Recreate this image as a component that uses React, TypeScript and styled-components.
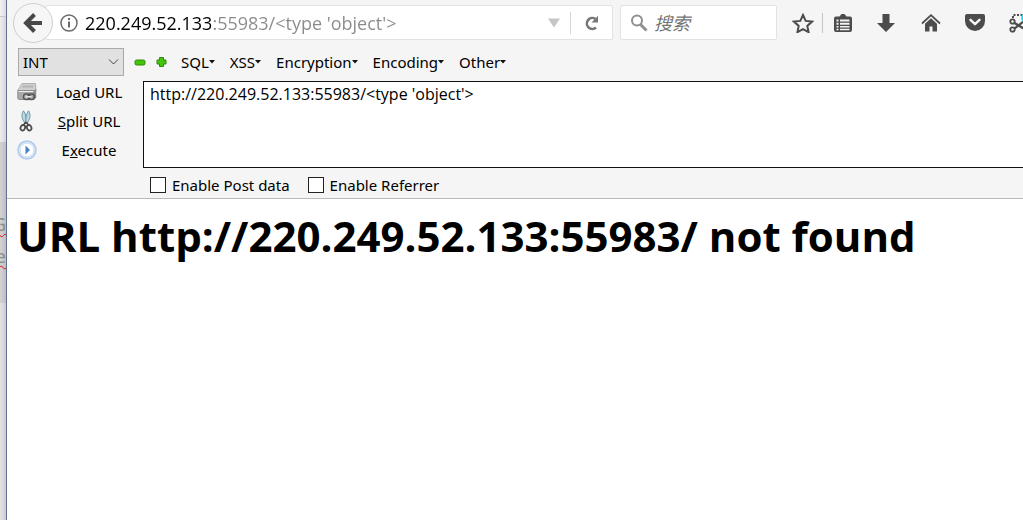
import React from "react";
import styled, { createGlobalStyle } from "styled-components";

const GlobalStyle = createGlobalStyle`
  *, *::before, *::after { box-sizing: border-box; }
  html, body { margin: 0; height: 100%; }
  #root { min-height: 100%; display: flex; }
  body, button, input, textarea, select {
    font-family: "Noto Sans", "Open Sans", "Noto Sans CJK SC", sans-serif;
    font-size: 15px;
    color: #000;
  }
  button { border: 0; padding: 0; background: none; }
`;

const Desktop = styled.div`
  display: flex;
  flex: 1;
  min-width: 0;
  min-height: 100vh;
  overflow: hidden;
  background: #fff;
`;

const BehindWindow = styled.aside`
  width: 6px;
  flex: none;
  overflow: hidden;
  display: flex;
  flex-direction: column;
  background: linear-gradient(to right, #e4e4e4, #cccccc);
`;

const BehindTop = styled.div`
  height: 17px;
  flex: none;
  border-bottom: 1px solid #c9c9c9;
  background: linear-gradient(to right, #f2f2f2, #dcdcdc);
`;

const BehindBlank = styled.div`
  height: 125px;
  flex: none;
  background: linear-gradient(to right, #eeeeee, #d6d6d6);
`;

const BehindText = styled.div`
  height: 161px;
  flex: none;
  padding-top: 66px;
  display: flex;
  flex-direction: column;
  align-items: flex-end;
  background: linear-gradient(to right, #d4d4d4, #bebebe);
  color: #8c8c8c;
  font-size: 18px;
  line-height: 32px;
`;

const Misspelled = styled.span`
  text-decoration: underline wavy #e01010 1px;
  text-underline-offset: 2px;
`;

const BrowserWindow = styled.div`
  flex: 1;
  min-width: 0;
  border-left: 1px solid #5f7391;
  overflow: hidden;
`;

const Chrome = styled.header`
  background: #f5f5f5;
  border-bottom: 1px solid #b9b9b9;
`;

const NavBar = styled.div`
  display: flex;
  align-items: center;
  height: 45px;
  padding-left: 6px;
  overflow: hidden;
`;

const BackButton = styled.button`
  position: relative;
  z-index: 1;
  flex: none;
  width: 40px;
  height: 40px;
  display: grid;
  place-items: center;
  border: 1px solid #cfcfcf;
  border-radius: 50%;
  background: #f6f6f6;
`;

const Field = styled.div`
  display: flex;
  align-items: center;
  height: 35px;
  border: 1px solid #e2e2e2;
  border-radius: 2px;
  background: #fff;
`;

const AddressField = styled(Field)`
  flex: 1;
  min-width: 0;
  margin-left: -8px;
  padding-left: 14px;
`;

const AddressInput = styled.input`
  flex: 1;
  min-width: 0;
  border: 0;
  outline: 0;
  padding: 0;
  margin-left: 7px;
  font-family: "Open Sans", "Noto Sans", sans-serif;
  font-size: 18px;
  color: transparent;
  caret-color: #000;
  background: linear-gradient(to right, #000 126px, #8a8a8a 126px);
  background-clip: text;
  -webkit-background-clip: text;
`;

const DropButton = styled.button`
  display: grid;
  place-items: center;
  width: 34px;
  height: 22px;
  border-right: 1px solid #d6d6d6;
`;

const ReloadButton = styled.button`
  display: grid;
  place-items: center;
  width: 41px;
  height: 24px;
`;

const SearchField = styled(Field)`
  flex: none;
  width: 157px;
  margin-left: 7px;
  padding-left: 9px;
`;

const SearchInput = styled.input`
  flex: 1;
  min-width: 0;
  border: 0;
  outline: 0;
  padding: 0;
  margin-left: 6px;
  font-size: 18px;
  background: transparent;
  &::placeholder { color: #757575; font-style: italic; opacity: 1; }
`;

const Tools = styled.div`
  flex: none;
  width: 246px;
  padding-left: 7px;
  display: flex;
  align-items: center;
  overflow: hidden;
`;

const ToolButton = styled.button<{ $wide?: number; $divided?: boolean }>`
  flex: none;
  display: grid;
  place-items: center;
  width: ${(p) => p.$wide ?? 44}px;
  height: 20px;
  border-right: ${(p) => (p.$divided ? "1px solid #c4c4c4" : "0")};
`;

const MenuRow = styled.div`
  display: flex;
  align-items: center;
  height: 34px;
  padding-left: 11px;
`;

const SelectBox = styled.div`
  position: relative;
  width: 106px;
  height: 28px;
  svg { position: absolute; right: 5px; top: 10px; pointer-events: none; }
`;

const TypeSelect = styled.select`
  appearance: none;
  width: 100%;
  height: 100%;
  padding: 0 4px;
  border: 1px solid #a9a9a9;
  border-radius: 0;
  background: #e1e1e1;
`;

const StepButton = styled.button`
  display: grid;
  place-items: center;
  width: 12px;
  height: 12px;
  margin-left: 10px;
`;

const Menus = styled.nav`
  display: flex;
  gap: 15px;
  margin-left: 13px;
`;

const MenuButton = styled.button`
  display: flex;
  align-items: center;
  line-height: 20px;
`;

const Editor = styled.div`
  display: flex;
  height: 89px;
  padding: 2px 0 0 8px;
`;

const Actions = styled.div`
  flex: none;
  width: 128px;
  display: flex;
  flex-direction: column;
  margin-top: -4px;
`;

const ActionButton = styled.button`
  display: grid;
  grid-template-columns: 24px 100px;
  place-items: center;
  width: 124px;
  height: 29px;
  line-height: 20px;
`;

const UrlText = styled.textarea`
  flex: 1;
  min-width: 0;
  height: 87px;
  padding: 2px 6px;
  border: 1px solid #111;
  border-right: 0;
  border-radius: 0;
  outline: 0;
  resize: none;
  font-family: "Open Sans", "Noto Sans", sans-serif;
  font-size: 16px;
  line-height: 20px;
  background: #fff;
`;

const Options = styled.div`
  display: flex;
  align-items: center;
  gap: 18px;
  height: 30px;
  padding: 4px 0 0 143px;
`;

const Option = styled.label`
  display: flex;
  align-items: center;
  gap: 6px;
  line-height: 20px;
`;

const Check = styled.input`
  appearance: none;
  width: 16px;
  height: 16px;
  margin: 0;
  border: 1px solid #222;
  background: #fff;
  &:checked { background: #444; }
`;

const Page = styled.main`
  padding: 7px 10px;
`;

const Message = styled.h1`
  margin: 0;
  font-family: "Open Sans", "Noto Sans", sans-serif;
  font-size: 42px;
  line-height: 60px;
  font-weight: 700;
  white-space: nowrap;
`;

const BackIcon = () => (
  <svg width="20" height="20" viewBox="0 0 20 20" fill="none" stroke="#484848" strokeWidth="4">
    <path d="M19 10H4M11.5 1.5 3 10l8.500 8.500" />
  </svg>
);

const InfoIcon = () => (
  <svg width="18" height="18" viewBox="0 0 18 18" fill="none" stroke="#6b6b6b">
    <circle cx="9" cy="9" r="8" strokeWidth="1.500" />
    <path d="M9 7.500v6M9 4v2" strokeWidth="2" />
  </svg>
);

const DropIcon = () => (
  <svg width="14" height="10" viewBox="0 0 14 10">
    <path d="M1 .5h12L7 9.500z" fill="#c6c6c6" />
  </svg>
);

const ReloadIcon = () => (
  <svg width="16" height="16" viewBox="0 0 16 16">
    <path d="M12 12.600A5.500 5.500 0 1 1 11.300 3.800" fill="none" stroke="#777" strokeWidth="2.600" />
    <path d="M14 .8V7.500H7.500z" fill="#777" />
  </svg>
);

const SearchIcon = () => (
  <svg width="18" height="18" viewBox="0 0 18 18" fill="none" stroke="#8f8f8f">
    <circle cx="7" cy="6.500" r="5" strokeWidth="2" />
    <path d="m10.500 10.500 6 6" strokeWidth="3" />
  </svg>
);

const StarIcon = () => (
  <svg width="22" height="22" viewBox="0 0 22 22">
    <path
      d="m11 2 2.700 5.900 6.300.7-4.700 4.300 1.300 6.300L11 16.200l-5.600 3 1.300-6.300L2 8.600l6.300-.7z"
      fill="none"
      stroke="#4c4c4c"
      strokeWidth="2"
    />
  </svg>
);

const ClipboardIcon = () => (
  <svg width="20" height="20" viewBox="0 0 20 20">
    <path
      fill="#4c4c4c"
      fillRule="evenodd"
      d="M8.500 1h3l2 2.500h3.500A2 2 0 0 1 19 5.500v11.500a2 2 0 0 1-2 2H3a2 2 0 0 1-2-2V5.500a2 2 0 0 1 2-2h3.500zM3.500 6.500v2h2v-2zm3.500 0v2h9.500v-2zm-3.500 3.300v1.900h2V9.800zm3.500 0v1.900h9.500V9.800zM3.500 13v1.600h2V13zM7 13v1.600h9.500V13zm-3.500 2.800v1.400h2v-1.400zm3.500 0v1.400h9.500v-1.400z"
    />
  </svg>
);

const DownloadIcon = () => (
  <svg width="20" height="20" viewBox="0 0 20 20">
    <path d="M6.500 1h7v9H19l-9 9-9-9h5.500z" fill="#4c4c4c" />
  </svg>
);

const HomeIcon = () => (
  <svg width="20" height="20" viewBox="0 0 20 20">
    <path d="M1 10.500 10 2.200l9 8.300" fill="none" stroke="#4c4c4c" strokeWidth="1.800" />
    <path d="m4 10.800 6-5.500 6 5.500v7.700h-4.500v-5h-3v5H4z" fill="#4c4c4c" />
  </svg>
);

const PocketIcon = () => (
  <svg width="22" height="20" viewBox="0 0 22 20">
    <path d="M3 1h16a2 2 0 0 1 2 2v5a10 10 0 0 1-20 0V3a2 2 0 0 1 2-2z" fill="#4c4c4c" />
    <path
      d="m6.500 6.800 4.500 4.300 4.500-4.300"
      fill="none"
      stroke="#f5f5f5"
      strokeWidth="2.500"
      strokeLinecap="round"
      strokeLinejoin="round"
    />
  </svg>
);

const SnipIcon = () => (
  <svg width="20" height="20" viewBox="0 0 20 20" fill="none" stroke="#4c4c4c">
    <path d="M4 5V2h12" strokeWidth="2" strokeDasharray="2 1.500" />
    <circle cx="3.500" cy="8.500" r="2.200" strokeWidth="1.800" />
    <circle cx="3.500" cy="16.500" r="2.200" strokeWidth="1.800" />
    <path d="m5.500 10 10 6M5.500 15.500 15 8" strokeWidth="2.200" />
    <circle cx="16" cy="5" r="4" fill="#20dff5" stroke="none" />
  </svg>
);

const ChevronIcon = () => (
  <svg width="11" height="8" viewBox="0 0 11 8">
    <path d="m1 1.500 4.500 4.500L10 1.500" fill="none" stroke="#444" />
  </svg>
);

const MinusIcon = () => (
  <svg width="12" height="12" viewBox="0 0 12 12">
    <rect x="1" y="4" width="10" height="5" rx="1.500" fill="#45c40c" stroke="#2c8a0a" />
  </svg>
);

const PlusIcon = () => (
  <svg width="12" height="12" viewBox="0 0 12 12">
    <path
      d="M3.500 1.500h4v2.500h2.500v4H7.500v2.500h-4V8H1V4h2.500z"
      fill="#45c40c"
      stroke="#2c8a0a"
      strokeLinejoin="round"
    />
  </svg>
);

const CaretIcon = () => (
  <svg width="6" height="4" viewBox="0 0 6 4">
    <path d="M0 0h6L3 3.500z" fill="#111" />
  </svg>
);

const LoadIcon = () => (
  <svg width="20" height="20" viewBox="0 0 20 20">
    <path d="M5 1.500h13.500l.5 7H.8z" fill="#cfcfcf" stroke="#b0b0b0" />
    <path d="M6 3.500h10l.5 2H5z" fill="#b4b4b4" />
    <path d="M.8 8.500h15.700V16a1.500 1.500 0 0 1-1.500 1.500H2.300A1.500 1.500 0 0 1 .8 16z" fill="#a9a9a9" stroke="#8d8d8d" />
    <path d="M16.500 8.500 19.200 7v9l-2.700 1.500z" fill="#8d8d8d" />
    <path d="M1.500 9.500h15" stroke="#ececec" />
    <g fill="none" stroke="#555" strokeWidth="1.600">
      <rect x="6.500" y="12" width="6.500" height="5.500" rx="2.700" fill="#c5c5c5" />
      <rect x="11" y="12" width="6.500" height="5.500" rx="2.700" />
    </g>
    <path d="M9.500 14.800h5" stroke="#eee" strokeWidth="1.500" />
  </svg>
);

const SplitIcon = () => (
  <svg width="20" height="22" viewBox="0 0 20 22">
    <path d="M6.500.8C4 4.500 4.500 9 8.300 13.500l1-.8C9.200 8 9 4 6.500.8z" fill="#b9dbe8" stroke="#7593a3" />
    <path d="M11.500.8c2.500 3.700 2 8.200-1.800 12.700l-1-.8C8.800 8 9 4 11.500.8z" fill="#b9dbe8" stroke="#7593a3" />
    <g fill="none" stroke="#4a4a4a" strokeWidth="1.800">
      <path d="m9 12-2.500 3M9 12l2.500 3" />
      <ellipse cx="5.800" cy="17.800" rx="2.200" ry="2.800" transform="rotate(20 5.800 17.800)" />
      <ellipse cx="12.200" cy="17.800" rx="2.200" ry="2.800" transform="rotate(-20 12.200 17.800)" />
    </g>
  </svg>
);

const ExecuteIcon = () => (
  <svg width="20" height="20" viewBox="0 0 20 20">
    <circle cx="10" cy="10" r="8.800" fill="#f4f8fd" stroke="#b3cdec" strokeWidth="2" />
    <circle cx="10" cy="10" r="6.800" fill="#fff" stroke="#d3dfee" />
    <path d="m8.500 5.500 4.500 4.500-4.500 4.500z" fill="#4a80c8" />
  </svg>
);

const menus = ["SQL", "XSS", "Encryption", "Encoding", "Other"];

export default function App() {
  return (
    <Desktop>
      <GlobalStyle />
      <BehindWindow>
        <BehindTop />
        <BehindBlank />
        <BehindText>
          <Misspelled>G</Misspelled>
          <Misspelled>e</Misspelled>
        </BehindText>
      </BehindWindow>
      <BrowserWindow>
        <Chrome>
          <NavBar>
            <BackButton aria-label="Back"><BackIcon /></BackButton>
            <AddressField>
              <InfoIcon />
              <AddressInput
                aria-label="Address"
                spellCheck={false}
                defaultValue="220.249.52.133:55983/<type 'object'>"
              />
              <DropButton aria-label="History"><DropIcon /></DropButton>
              <ReloadButton aria-label="Reload"><ReloadIcon /></ReloadButton>
            </AddressField>
            <SearchField>
              <SearchIcon />
              <SearchInput aria-label="搜索" placeholder="搜索" />
            </SearchField>
            <Tools>
              <ToolButton aria-label="Bookmark" $wide={39} $divided><StarIcon /></ToolButton>
              <ToolButton aria-label="Reading list" $wide={40}><ClipboardIcon /></ToolButton>
              <ToolButton aria-label="Downloads" $wide={46}><DownloadIcon /></ToolButton>
              <ToolButton aria-label="Home"><HomeIcon /></ToolButton>
              <ToolButton aria-label="Pocket"><PocketIcon /></ToolButton>
              <ToolButton aria-label="Screenshot"><SnipIcon /></ToolButton>
            </Tools>
          </NavBar>
          <MenuRow>
            <SelectBox>
              <TypeSelect aria-label="Type" defaultValue="INT">
                <option>INT</option>
              </TypeSelect>
              <ChevronIcon />
            </SelectBox>
            <StepButton aria-label="Decrease"><MinusIcon /></StepButton>
            <StepButton aria-label="Increase"><PlusIcon /></StepButton>
            <Menus>
              {menus.map((name) => (
                <MenuButton key={name}>{name}<CaretIcon /></MenuButton>
              ))}
            </Menus>
          </MenuRow>
          <Editor>
            <Actions>
              <ActionButton><LoadIcon /><span>Lo<u>a</u>d URL</span></ActionButton>
              <ActionButton><SplitIcon /><span><u>S</u>plit URL</span></ActionButton>
              <ActionButton><ExecuteIcon /><span>E<u>x</u>ecute</span></ActionButton>
            </Actions>
            <UrlText
              aria-label="URL"
              spellCheck={false}
              defaultValue="http://220.249.52.133:55983/<type 'object'>"
            />
          </Editor>
          <Options>
            <Option><Check type="checkbox" />Enable Post data</Option>
            <Option><Check type="checkbox" />Enable Referrer</Option>
          </Options>
        </Chrome>
        <Page>
          <Message>URL http://220.249.52.133:55983/ not found</Message>
        </Page>
      </BrowserWindow>
    </Desktop>
  );
}
